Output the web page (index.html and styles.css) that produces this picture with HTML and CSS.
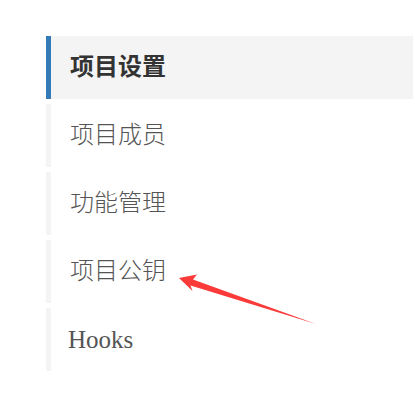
FILE: index.html
```html
<!DOCTYPE html>
<html lang="zh-CN">
<head>
  <meta charset="UTF-8" />
  <title>项目设置</title>
  <link rel="stylesheet" href="styles.css">
</head>
<body>
  <div class="page">
    <ul class="side-menu">
      <li class="menu-item active">项目设置</li>
      <li class="menu-item">项目成员</li>
      <li class="menu-item">功能管理</li>
      <li class="menu-item">项目公钥</li>
      <li class="menu-item latin">Hooks</li>
    </ul>

    <svg class="arrow" width="415" height="413" viewBox="0 0 415 413">
      <polygon points="179,278 197,274.5 193,279.5 316,324 190.5,285.5 192.5,291" fill="#fb3a3a"/>
    </svg>
  </div>
</body>
</html>
```

FILE: styles.css
```css
* {
  margin: 0;
  padding: 0;
  box-sizing: border-box;
}

body {
  background: #fff;
  font-family: "Liberation Serif", "Noto Sans CJK SC", serif;
}

.page {
  position: relative;
  width: 415px;
  height: 413px;
  padding: 36px 2px 0 46px;
}

.side-menu {
  list-style: none;
  display: flex;
  flex-direction: column;
  gap: 5px;
}

.menu-item {
  height: 63px;
  line-height: 63px;
  padding-left: 19px;
  border-left: 5px solid #f4f4f4;
  font-size: 24px;
  font-weight: 300;
  color: #555;
}

.menu-item.latin {
  padding-left: 17px;
  font-size: 25px;
}

.menu-item.active {
  background: #f4f4f4;
  border-left-color: #337ab7;
  font-weight: bold;
  color: #333;
}

.arrow {
  position: absolute;
  left: 0;
  top: 0;
  pointer-events: none;
}
```
